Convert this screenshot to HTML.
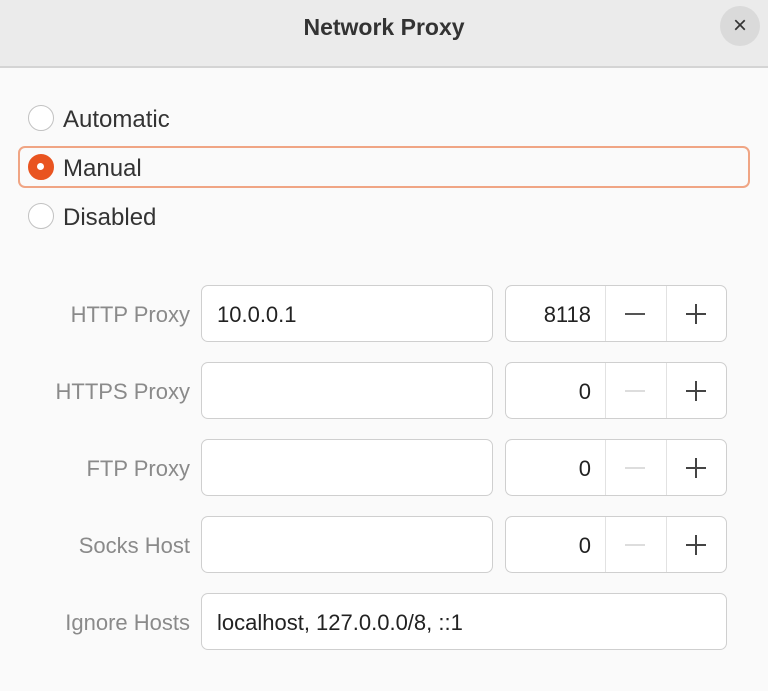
<!DOCTYPE html><html><head><style>
body{margin:0;width:768px;height:691px;background:#fafafa;font-family:"Liberation Sans",sans-serif;position:relative;overflow:hidden}
.hdr{position:absolute;left:0;top:0;width:768px;height:66px;background:#ebebeb;border-bottom:2px solid #d4d4d4}
.title{position:absolute;top:14px;width:768px;text-align:center;font-weight:bold;font-size:23px;color:#333}
.close{position:absolute;left:720px;top:6px;width:40px;height:40px;border-radius:50%;background:#dadada;text-align:center;line-height:40px;font-size:24px;color:#333}
.r{position:absolute;left:28px;width:26px;height:26px;border:1.5px solid #c2c2c2;border-radius:50%;background:#fff;box-sizing:border-box}
.rl{position:absolute;left:63px;font-size:24px;color:#333}
.man{position:absolute;left:18px;top:146px;width:732px;height:42px;border:2px solid #f0a584;border-radius:7px;box-sizing:border-box}
.lab{position:absolute;right:578px;font-size:22px;color:#8a8a8a;text-align:right}
.e{position:absolute;left:201px;width:292px;height:57px;border:1.5px solid #cfcfcf;border-radius:7px;background:#fff;box-sizing:border-box;font-size:22px;color:#222;padding:16px 0 0 15px}
.s{position:absolute;left:505px;width:222px;height:57px;border:1.5px solid #cfcfcf;border-radius:7px;background:#fff;box-sizing:border-box}
.s .v{position:absolute;right:135px;top:16px;font-size:22px;color:#222}
.s .d1{position:absolute;left:99px;top:0;bottom:0;border-left:1px solid #e2e2e2}
.s .d2{position:absolute;left:160px;top:0;bottom:0;border-left:1px solid #e2e2e2}
.s .m{position:absolute;left:119px;top:27px;width:20px;height:1.5px;background:#555}
.s .m.dis{background:#ddd}
.s .p1{position:absolute;left:180px;top:27px;width:20px;height:1.5px;background:#444}
.s .p2{position:absolute;left:189px;top:18px;width:1.5px;height:20px;background:#444}
</style></head><body>
<div class="hdr"><div class="title">Network Proxy</div><div class="close">×</div></div>
<div class="man"></div>
<div class="r" style="top:105px"></div><div class="rl" style="top:106px">Automatic</div>
<div class="r" style="top:154px;background:#e95420;border-color:#e95420"><div style="position:absolute;left:8px;top:8px;width:7px;height:7px;border-radius:50%;background:#fff"></div></div><div class="rl" style="top:155px">Manual</div>
<div class="r" style="top:203px"></div><div class="rl" style="top:204px">Disabled</div>

<div class="lab" style="top:302px">HTTP Proxy</div>
<div class="e" style="top:285px">10.0.0.1</div>
<div class="s" style="top:285px"><div class="v">8118</div><div class="d1"></div><div class="d2"></div><div class="m"></div><div class="p1"></div><div class="p2"></div></div>

<div class="lab" style="top:379px">HTTPS Proxy</div>
<div class="e" style="top:362px"></div>
<div class="s" style="top:362px"><div class="v">0</div><div class="d1"></div><div class="d2"></div><div class="m dis"></div><div class="p1"></div><div class="p2"></div></div>

<div class="lab" style="top:456px">FTP Proxy</div>
<div class="e" style="top:439px"></div>
<div class="s" style="top:439px"><div class="v">0</div><div class="d1"></div><div class="d2"></div><div class="m dis"></div><div class="p1"></div><div class="p2"></div></div>

<div class="lab" style="top:533px">Socks Host</div>
<div class="e" style="top:516px"></div>
<div class="s" style="top:516px"><div class="v">0</div><div class="d1"></div><div class="d2"></div><div class="m dis"></div><div class="p1"></div><div class="p2"></div></div>

<div class="lab" style="top:610px">Ignore Hosts</div>
<div class="e" style="top:593px;width:526px">localhost, 127.0.0.0/8, ::1</div>
</body></html>
